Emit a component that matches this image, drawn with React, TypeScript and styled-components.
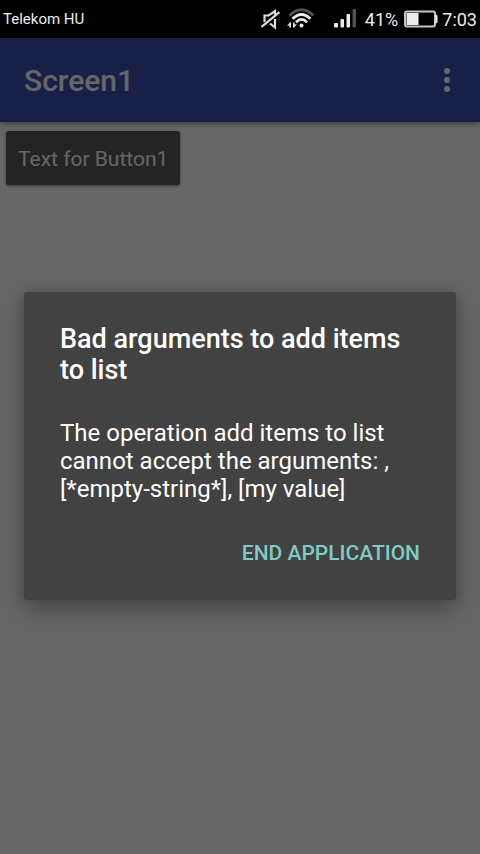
import React from "react";
import styled, { createGlobalStyle } from "styled-components";

const GlobalStyle = createGlobalStyle`
  *, *::before, *::after { box-sizing: border-box; }
  html, body, #root { height: 100%; }
  body {
    margin: 0;
    background: #ffffff;
    font-family: Roboto, "Liberation Sans", sans-serif;
  }
  button { font-family: inherit; border: 0; cursor: pointer; }
`;

const Screen = styled.div`
  min-height: 100%;
  display: flex;
  flex-direction: column;
`;

const StatusBar = styled.header`
  height: 38px;
  padding: 0 3px;
  display: flex;
  align-items: center;
  justify-content: space-between;
  background: #000000;
  color: #ececec;
`;

const Carrier = styled.span`
  font-size: 15px;
  line-height: 18px;
`;

const StatusItems = styled.div`
  display: flex;
  align-items: center;
`;

const StatusText = styled.span<{ $gap: number }>`
  margin-left: ${({ $gap }) => $gap}px;
  padding-top: 2px;
  font-size: 18px;
  line-height: 22px;
`;

const StatusIcon = styled.svg`
  display: block;
  flex: none;
`;

const Content = styled.div`
  position: relative;
  flex: 1;
  display: flex;
  flex-direction: column;
`;

const AppBar = styled.div`
  height: 84px;
  padding: 0 15px 0 24px;
  display: flex;
  align-items: center;
  justify-content: space-between;
  background: #3f51b5;
  color: #ffffff;
  box-shadow: 0 1px 6px rgba(0, 0, 0, 0.5);
`;

const AppTitle = styled.h1`
  margin: 0;
  padding-top: 2px;
  font-size: 30px;
  line-height: 36px;
  font-weight: 500;
`;

const MenuButton = styled.button`
  width: 36px;
  height: 48px;
  padding: 0;
  display: grid;
  place-items: center;
  background: none;
  color: inherit;
`;

const Page = styled.main`
  padding: 9px 6px;
`;

const RaisedButton = styled.button`
  height: 54px;
  padding: 2px 12px 0;
  border-radius: 3px;
  background: #5a5a5a;
  color: #ffffff;
  font-size: 21px;
  line-height: 24px;
  box-shadow: 0 1px 3px rgba(0, 0, 0, 0.5);
`;

const Scrim = styled.div`
  position: absolute;
  inset: 0;
  padding: 24px;
  display: flex;
  align-items: center;
  justify-content: center;
  background: rgba(0, 0, 0, 0.6);
`;

const Dialog = styled.section`
  width: 100%;
  padding: 32px 24px 20px 36px;
  display: flex;
  flex-direction: column;
  border-radius: 3px;
  background: #424242;
  color: #ffffff;
  box-shadow: 0 10px 24px rgba(0, 0, 0, 0.27), 0 0 14px rgba(0, 0, 0, 0.15);
`;

const DialogTitle = styled.h2`
  margin: 0 12px 0 0;
  font-size: 27px;
  line-height: 31px;
  font-weight: 500;
`;

const Message = styled.p`
  margin: 33px 12px 0 0;
  font-size: 24px;
  line-height: 28px;
`;

const Actions = styled.div`
  margin-top: 23px;
  display: flex;
  justify-content: flex-end;
`;

const TextButton = styled.button`
  height: 54px;
  padding: 0 12px;
  background: none;
  color: #80cbc4;
  font-size: 21px;
  line-height: 24px;
  font-weight: 500;
  text-transform: uppercase;
`;

const MutedIcon = () => (
  <StatusIcon width="22" height="22" viewBox="0 0 22 22" fill="none" aria-label="Sound off">
    <path d="M12 5.800L16 3v5M5.500 14V7.500H9.500L12 5.800M11 15.500L16 19.500V11" stroke="#dcdcdc" strokeWidth="2.200" />
    <path d="M2.500 18.800L20.500 4.200" stroke="#dcdcdc" strokeWidth="2.200" />
  </StatusIcon>
);

const WifiIcon = () => (
  <StatusIcon width="30" height="22" viewBox="0 0 30 22" fill="none" aria-label="Wi-Fi">
    <path d="M2.500 7.500Q14.500 -4 26.500 7.500" stroke="#505050" strokeWidth="2.800" />
    <path d="M5.500 10.800Q14.500 2 23.500 10.800" stroke="#ececec" strokeWidth="2.800" />
    <path d="M9 14.300Q14.500 8.500 20 14.300" stroke="#ececec" strokeWidth="2.600" />
    <circle cx="14.500" cy="17.500" r="2" fill="#ececec" />
    <path d="M3.200 14.500v5M6.800 14.500v5" stroke="#ececec" strokeWidth="1.600" />
    <path d="M0 17.500l3.200-3v3zM10 16.500L6.800 19.500v-3z" fill="#ececec" />
  </StatusIcon>
);

const SignalIcon = () => (
  <StatusIcon width="24" height="22" viewBox="0 0 24 22" aria-label="Signal">
    <g fill="#ececec">
      <rect x="1" y="15" width="4" height="4.500" rx="1" />
      <rect x="7.500" y="11" width="3.500" height="8.500" rx="1" />
      <rect x="13.500" y="6" width="3.500" height="13.500" rx="1" />
    </g>
    <rect x="19.500" y="1" width="3.500" height="18.500" rx="1" fill="#505050" />
  </StatusIcon>
);

const BatteryIcon = () => (
  <StatusIcon width="34" height="18" viewBox="0 0 34 18" aria-label="Battery">
    <rect x="1" y="1.500" width="30" height="15" rx="2" fill="none" stroke="#c6c6c6" strokeWidth="2" />
    <rect x="2.500" y="3" width="12" height="12" fill="#ececec" />
    <path d="M31.500 4.500l2 1v7l-2 1z" fill="#ececec" />
  </StatusIcon>
);

const MoreIcon = () => (
  <svg width="8" height="26" viewBox="0 0 8 26" fill="currentColor" aria-hidden="true">
    <circle cx="4" cy="4" r="3" />
    <circle cx="4" cy="13" r="3" />
    <circle cx="4" cy="22" r="3" />
  </svg>
);

const Connectivity = styled.div`
  display: flex;
  align-items: center;
  gap: 6px;
`;

const SignalSlot = styled.div`
  margin-left: 10px;
`;

const BatterySlot = styled.div`
  margin-left: 6px;
`;

export default function App() {
  return (
    <Screen>
      <GlobalStyle />
      <StatusBar>
        <Carrier>Telekom HU</Carrier>
        <StatusItems>
          <Connectivity>
            <MutedIcon />
            <WifiIcon />
            <SignalSlot><SignalIcon /></SignalSlot>
          </Connectivity>
          <StatusText $gap={8}>41%</StatusText>
          <BatterySlot><BatteryIcon /></BatterySlot>
          <StatusText $gap={4}>7:03</StatusText>
        </StatusItems>
      </StatusBar>
      <Content>
        <AppBar>
          <AppTitle>Screen1</AppTitle>
          <MenuButton type="button" aria-label="More options"><MoreIcon /></MenuButton>
        </AppBar>
        <Page>
          <RaisedButton type="button">Text for Button1</RaisedButton>
        </Page>
        <Scrim>
          <Dialog role="alertdialog" aria-modal="true" aria-labelledby="dialog-title" aria-describedby="dialog-message">
            <DialogTitle id="dialog-title">Bad arguments to add items to list</DialogTitle>
            <Message id="dialog-message">
              The operation add items to list cannot accept the arguments: , [*empty-string*], [my value]
            </Message>
            <Actions>
              <TextButton type="button">End Application</TextButton>
            </Actions>
          </Dialog>
        </Scrim>
      </Content>
    </Screen>
  );
}
